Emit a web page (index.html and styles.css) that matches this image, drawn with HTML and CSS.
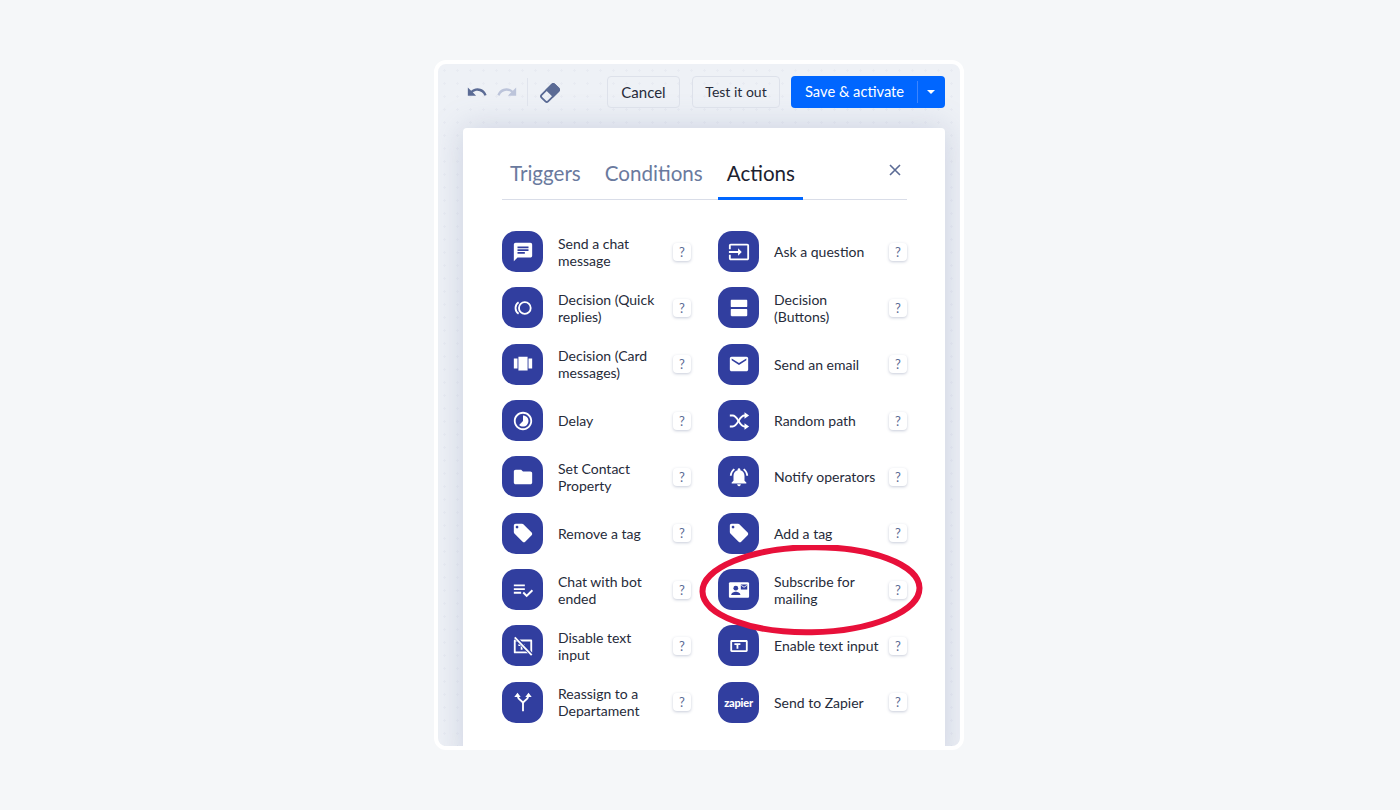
FILE: index.html
```html
<!DOCTYPE html>
<html lang="en">
<head>
    <meta charset="utf-8" />
    <title>Actions</title>
    <link rel="stylesheet" href="styles.css">
</head>

<body>
<div class="frame">
    <div class="toolbar">
        <svg class="tool_icon undo" viewBox="0 0 24 24"><path d="M12.5 8c-2.65 0-5.05.99-6.9 2.6L2 7v9h9l-3.62-3.62c1.39-1.16 3.16-1.88 5.12-1.88 3.54 0 6.55 2.31 7.6 5.5l2.37-.78C21.08 11.03 17.15 8 12.5 8z"/></svg>
        <svg class="tool_icon redo" viewBox="0 0 24 24"><path d="M18.4 10.6C16.55 8.99 14.15 8 11.5 8c-4.65 0-8.58 3.03-9.96 7.22L3.9 16c1.05-3.19 4.05-5.5 7.6-5.5 1.95 0 3.73.72 5.12 1.88L13 16h9V7l-3.6 3.6z"/></svg>
        <span class="tool_sep"></span>
        <svg class="tool_icon eraser" viewBox="0 0 24 24"><g transform="rotate(-45 12 12)"><rect class="eraser_edge" x="2" y="7" width="20" height="10" rx="2"/><path d="M11 6h9a3 3 0 0 1 3 3v6a3 3 0 0 1-3 3h-9z"/></g></svg>
        <a class="btn btn_cancel" href="javascript:;">Cancel</a>
        <a class="btn btn_test" href="javascript:;">Test it out</a>
        <div class="btn_save">
            <span class="save_label">Save &amp; activate</span>
            <span class="save_caret"></span>
        </div>
    </div>

    <div class="panel">
        <div class="tabs">
            <a class="tab" href="javascript:;">Triggers</a>
            <a class="tab" href="javascript:;">Conditions</a>
            <a class="tab tab_active" href="javascript:;">Actions</a>
            <svg class="close" viewBox="0 0 12 12"><path d="M1 1l10 10M11 1 1 11"/></svg>
        </div>

        <ul class="action_list">
            <li class="action">
                <span class="action_icon"><svg viewBox="0 0 24 24"><path d="M20 2H4c-1.1 0-1.99.9-1.99 2L2 22l4-4h14c1.1 0 2-.9 2-2V4c0-1.1-.9-2-2-2zM6 9h12v2H6V9zm8 5H6v-2h8v2zm4-6H6V6h12v2z"/></svg></span>
                <span class="action_name">Send a chat message</span>
                <span class="help">?</span>
            </li>
            <li class="action">
                <span class="action_icon"><svg viewBox="0 0 24 24"><path d="M21 3.01H3c-1.1 0-2 .9-2 2V9h2V4.99h18v14.03H3V15H1v4.01c0 1.1.9 1.98 2 1.98h18c1.1 0 2-.88 2-1.98v-14c0-1.11-.9-2-2-2zM11 16l4-4-4-4v3H1v2h10v3z"/></svg></span>
                <span class="action_name">Ask a question</span>
                <span class="help">?</span>
            </li>
            <li class="action">
                <span class="action_icon"><svg viewBox="0 0 24 24"><path class="line" d="M7.2 5.8a7.4 7.4 0 0 0 0 12.4"/><circle class="line" cx="14" cy="12" r="6.4"/></svg></span>
                <span class="action_name">Decision (Quick replies)</span>
                <span class="help">?</span>
            </li>
            <li class="action">
                <span class="action_icon"><svg viewBox="0 0 24 24"><path d="M20 13H4c-.55 0-1 .45-1 1v6c0 .55.45 1 1 1h16c.55 0 1-.45 1-1v-6c0-.55-.45-1-1-1zm0-10H4c-.55 0-1 .45-1 1v6c0 .55.45 1 1 1h16c.55 0 1-.45 1-1V4c0-.55-.45-1-1-1z"/></svg></span>
                <span class="action_name">Decision (Buttons)</span>
                <span class="help">?</span>
            </li>
            <li class="action">
                <span class="action_icon"><svg viewBox="0 0 24 24"><path d="M7 19h10V4H7v15zm-5-2h4V6H2v11zM18 6v11h4V6h-4z"/></svg></span>
                <span class="action_name">Decision (Card messages)</span>
                <span class="help">?</span>
            </li>
            <li class="action">
                <span class="action_icon"><svg viewBox="0 0 24 24"><path d="M20 4H4c-1.1 0-1.99.9-1.99 2L2 18c0 1.1.9 2 2 2h16c1.1 0 2-.9 2-2V6c0-1.1-.9-2-2-2zm0 4l-8 5-8-5V6l8 5 8-5v2z"/></svg></span>
                <span class="action_name">Send an email</span>
                <span class="help">?</span>
            </li>
            <li class="action">
                <span class="action_icon"><svg viewBox="0 0 24 24"><path d="M16.24 7.76C15.07 6.59 13.54 6 12 6v6l-4.24 4.24c2.34 2.34 6.14 2.34 8.49 0 2.34-2.34 2.34-6.14-.01-8.48zM12 2C6.48 2 2 6.48 2 12s4.48 10 10 10 10-4.48 10-10S17.52 2 12 2zm0 18c-4.42 0-8-3.58-8-8s3.58-8 8-8 8 3.58 8 8-3.58 8-8 8z"/></svg></span>
                <span class="action_name">Delay</span>
                <span class="help">?</span>
            </li>
            <li class="action">
                <span class="action_icon"><svg viewBox="0 0 24 24"><path class="line" d="M2 6h3c6 0 7 12 13 12h1"/><path class="line" d="M2 18h3c6 0 7-12 13-12h1"/><path d="M18 2.5 23 6l-5 3.500zM18 14.500l5 3.500-5 3.500z"/></svg></span>
                <span class="action_name">Random path</span>
                <span class="help">?</span>
            </li>
            <li class="action">
                <span class="action_icon"><svg viewBox="0 0 24 24"><path d="M10 4H4c-1.1 0-1.99.9-1.99 2L2 18c0 1.1.9 2 2 2h16c1.1 0 2-.9 2-2V8c0-1.1-.9-2-2-2h-8l-2-2z"/></svg></span>
                <span class="action_name">Set Contact Property</span>
                <span class="help">?</span>
            </li>
            <li class="action">
                <span class="action_icon"><svg viewBox="0 0 24 24"><path d="M7.58 4.08L6.15 2.65C3.75 4.48 2.17 7.3 2.03 10.5h2c.15-2.65 1.51-4.97 3.55-6.42zm12.39 6.42h2c-.15-3.2-1.73-6.02-4.12-7.85l-1.42 1.43c2.02 1.45 3.39 3.77 3.54 6.42zM18 11c0-3.07-1.64-5.64-4.5-6.32V4c0-.83-.67-1.5-1.5-1.5s-1.5.67-1.5 1.5v.68C7.63 5.36 6 7.92 6 11v5l-2 2v1h16v-1l-2-2v-5zm-6 11c.14 0 .27-.01.4-.04.65-.14 1.18-.58 1.44-1.18.1-.24.15-.5.15-.78h-4c.01 1.1.9 2 2.01 2z"/></svg></span>
                <span class="action_name">Notify operators</span>
                <span class="help">?</span>
            </li>
            <li class="action">
                <span class="action_icon"><svg viewBox="0 0 24 24"><path d="M21.41 11.58l-9-9C12.05 2.22 11.55 2 11 2H4c-1.1 0-2 .9-2 2v7c0 .55.22 1.05.59 1.42l9 9c.36.36.86.58 1.41.58.55 0 1.05-.22 1.41-.59l7-7c.37-.36.59-.86.59-1.41 0-.55-.23-1.06-.59-1.42zM5.5 7C4.67 7 4 6.33 4 5.5S4.67 4 5.5 4 7 4.67 7 5.5 6.33 7 5.5 7z"/></svg></span>
                <span class="action_name">Remove a tag</span>
                <span class="help">?</span>
            </li>
            <li class="action">
                <span class="action_icon"><svg viewBox="0 0 24 24"><path d="M21.41 11.58l-9-9C12.05 2.22 11.55 2 11 2H4c-1.1 0-2 .9-2 2v7c0 .55.22 1.05.59 1.42l9 9c.36.36.86.58 1.41.58.55 0 1.05-.22 1.41-.59l7-7c.37-.36.59-.86.59-1.41 0-.55-.23-1.06-.59-1.42zM5.5 7C4.67 7 4 6.33 4 5.5S4.67 4 5.5 4 7 4.67 7 5.5 6.33 7 5.5 7z"/></svg></span>
                <span class="action_name">Add a tag</span>
                <span class="help">?</span>
            </li>
            <li class="action">
                <span class="action_icon"><svg viewBox="0 0 24 24"><path d="M14 10H2v2h12v-2zm0-4H2v2h12V6zM2 16h8v-2H2v2zm19.5-4.500L23 13l-6.990 7-4.510-4.500L13 14l3.010 3 5.490-5.500z"/></svg></span>
                <span class="action_name">Chat with bot ended</span>
                <span class="help">?</span>
            </li>
            <li class="action">
                <span class="action_icon"><svg viewBox="0 0 24 24"><path d="M2.500 3.500h19c.8 0 1.500.7 1.500 1.500v14c0 .8-.7 1.500-1.500 1.500h-19C1.700 20.500 1 19.800 1 19V5c0-.8.7-1.500 1.500-1.500z"/><circle class="cut" cx="8.500" cy="10" r="2.600"/><path class="cut" d="M3.500 17.500c0-2.200 3-3.500 5-3.500s5 1.300 5 3.500z"/><rect class="cut" x="14" y="6" width="7" height="5.500"/><path class="cut_line" d="M14.500 7l3 2 3-2"/></svg></span>
                <span class="action_name">Subscribe for mailing</span>
                <span class="help">?</span>
            </li>
            <li class="action">
                <span class="action_icon"><svg viewBox="0 0 24 24"><path fill-rule="evenodd" d="M3 5h18c.6 0 1 .4 1 1v13c0 .6-.4 1-1 1H3c-.6 0-1-.4-1-1V6c0-.6.4-1 1-1zm1 2v11h16V7z"/><path d="M7 10h7v2h-2.500v4h-2v-4H7z"/><path class="gap" d="M3 2 22 22"/><path class="line" d="M3 2.500 21.500 22"/></svg></span>
                <span class="action_name">Disable text input</span>
                <span class="help">?</span>
            </li>
            <li class="action">
                <span class="action_icon"><svg viewBox="0 0 24 24"><path fill-rule="evenodd" d="M4 5.500h16c.8 0 1.500.7 1.500 1.500v10c0 .8-.7 1.500-1.500 1.500H4c-.8 0-1.500-.7-1.500-1.500V7c0-.8.7-1.500 1.500-1.500zM4.500 7.500v9h15v-9z"/><path d="M7 9h6.500v2h-2.200v4h-2v-4H7z"/></svg></span>
                <span class="action_name">Enable text input</span>
                <span class="help">?</span>
            </li>
            <li class="action">
                <span class="action_icon"><svg viewBox="0 0 24 24"><path class="line" d="M12 22v-8.500c0-3-5.500-3.500-6-8.500"/><path class="line" d="M12 13.500c0-3 5.500-3.500 6-8.500"/><path d="M2.500 6.500 6 2l3.500 4.500zM14.500 6.500 18 2l3.500 4.500z"/></svg></span>
                <span class="action_name">Reassign to a Departament</span>
                <span class="help">?</span>
            </li>
            <li class="action">
                <span class="action_icon"><span class="zapier">zapier</span></span>
                <span class="action_name">Send to Zapier</span>
                <span class="help">?</span>
            </li>
        </ul>
    </div>

    <svg class="ring" viewBox="0 0 226 94"><ellipse cx="112" cy="44.700" rx="108.500" ry="42.500" transform="rotate(-1 112 44.700)"/></svg>
</div>
</body>
</html>
```

FILE: styles.css
```css
*{box-sizing: border-box;}
html,body{height: 100%;}
body{margin: 0;padding: 60px 0 0 434px;background: #f5f7f9;font-family: "Lato","Noto Sans",sans-serif;color: #262b3a;overflow: hidden;}
a{text-decoration: none;color: inherit;}

.frame{position: relative;width: 530px;height: 690px;border: 4px solid #fff;border-radius: 12px;background-color: #eef1f6;background-image: radial-gradient(circle,#e8ebf2 1px,transparent 1.2px);background-size: 13px 13px;overflow: hidden;}

.toolbar{display: flex;align-items: center;height: 44px;padding: 12px 14px 0 28px;}
.tool_icon{width: 22px;height: 22px;fill: #5b6b95;flex: none;}
.undo{margin-right: 8px;}
.redo{fill: #bcc4da;}
.tool_sep{width: 1px;height: 28px;margin: 0 11px 0 9px;background: #dfe3ec;}
.eraser{margin-top: 1px;}
.eraser_edge{fill: none;stroke: #5b6b95;stroke-width: 2;}
.btn{display: flex;align-items: center;justify-content: center;height: 32px;padding-bottom: 1px;border: 1px solid #dde1ea;border-radius: 4px;font-size: 15px;color: #262b3a;}
.btn_cancel{width: 73px;margin-left: 46px;}
.btn_test{width: 88px;margin-left: 12px;font-size: 14px;}
.btn_save{display: flex;align-items: center;width: 154px;height: 32px;margin-left: 11px;background: #0066ff;border-radius: 4px;color: #fff;font-size: 14.700px;}
.save_label{width: 127px;height: 22px;line-height: 20px;padding-left: 14px;border-right: 1px solid #3d85ff;}
.save_caret{width: 0;height: 0;margin-left: 9px;border: 4px solid transparent;border-top: 4px solid #fff;border-bottom: 0;}

.panel{height: 640px;margin: 20px 15px 0 25px;padding: 0 38px 0 39px;background: #fff;border-radius: 4px;box-shadow: 0 0 32px rgba(110,125,170,.28);}
.tabs{display: flex;gap: 8px;height: 72px;padding-top: 30px;border-bottom: 1px solid #d9dde8;}
.tab{height: 42px;padding: 0 8px;font-size: 20.600px;line-height: 30px;color: #6a7a9e;}
.tab_active{padding-left: 9px;margin-left: -1px;color: #1c2130;border-bottom: 3px solid #0066ff;margin-bottom: -1px;}
.close{width: 12px;height: 12px;margin: 6px 6px 0 auto;fill: none;stroke: #5b6b95;stroke-width: 1.600;}

.action_list{display: grid;grid-template-columns: 189px 189px;column-gap: 27px;row-gap: 15.350px;margin: 31px 0 0 0;padding: 0;list-style: none;}
.action{display: flex;align-items: center;height: 41px;}
.action_icon{display: flex;align-items: center;justify-content: center;flex: none;width: 41px;height: 41px;margin-right: 15px;background: #313e9f;border-radius: 14px;}
.action_icon svg{width: 22px;height: 22px;fill: #fff;}
.action_icon .line{fill: none;stroke: #fff;stroke-width: 2;}
.action_icon .gap{fill: none;stroke: #313e9f;stroke-width: 4;}
.action_icon .cut{fill: #313e9f;}
.action_icon .cut_line{fill: none;stroke: #fff;stroke-width: 1;}
.action_name{flex: none;width: 108px;font-size: 14px;line-height: 17px;color: #262b3a;}
.help{flex: none;width: 18px;height: 18px;margin-left: auto;background: #fff;border-radius: 4px;box-shadow: 0 1px 3px rgba(70,85,130,.3);font-size: 13px;line-height: 18px;text-align: center;color: #5b6b95;}
.zapier{font-size: 11px;font-weight: 900;color: #fff;letter-spacing: -.2px;}

.ring{position: absolute;left: 261px;top: 481px;width: 226px;height: 94px;fill: none;stroke: #e8103a;stroke-width: 6;}
```
